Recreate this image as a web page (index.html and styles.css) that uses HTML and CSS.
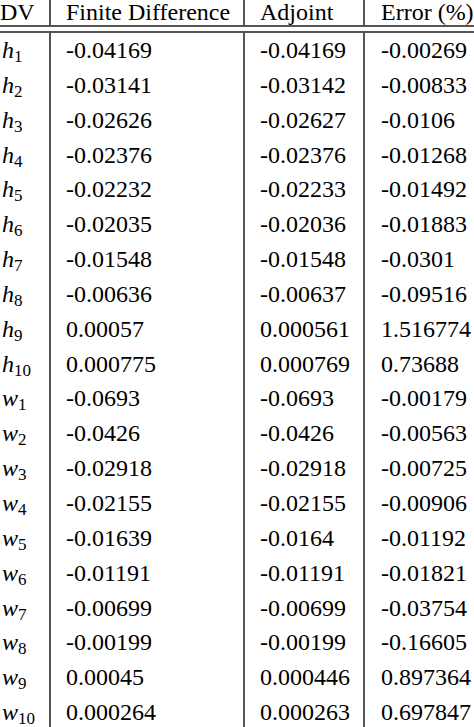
FILE: index.html
```html
<!DOCTYPE html>
<html>
<head>
<meta charset="utf-8">
<link rel="stylesheet" href="styles.css">
</head>
<body>
<div class="wrap">
  <div class="grid head">
    <div class="c c1 dv">DV</div>
    <div class="c c2">Finite Difference</div>
    <div class="c c3">Adjoint</div>
    <div class="c c4">Error (%)</div>
  </div>
  <div class="grid body">
    <div class="c c1"><i>h</i><sub>1</sub></div><div class="c c2">-0.04169</div><div class="c c3">-0.04169</div><div class="c c4">-0.00269</div>
    <div class="c c1"><i>h</i><sub>2</sub></div><div class="c c2">-0.03141</div><div class="c c3">-0.03142</div><div class="c c4">-0.00833</div>
    <div class="c c1"><i>h</i><sub>3</sub></div><div class="c c2">-0.02626</div><div class="c c3">-0.02627</div><div class="c c4">-0.0106</div>
    <div class="c c1"><i>h</i><sub>4</sub></div><div class="c c2">-0.02376</div><div class="c c3">-0.02376</div><div class="c c4">-0.01268</div>
    <div class="c c1"><i>h</i><sub>5</sub></div><div class="c c2">-0.02232</div><div class="c c3">-0.02233</div><div class="c c4">-0.01492</div>
    <div class="c c1"><i>h</i><sub>6</sub></div><div class="c c2">-0.02035</div><div class="c c3">-0.02036</div><div class="c c4">-0.01883</div>
    <div class="c c1"><i>h</i><sub>7</sub></div><div class="c c2">-0.01548</div><div class="c c3">-0.01548</div><div class="c c4">-0.0301</div>
    <div class="c c1"><i>h</i><sub>8</sub></div><div class="c c2">-0.00636</div><div class="c c3">-0.00637</div><div class="c c4">-0.09516</div>
    <div class="c c1"><i>h</i><sub>9</sub></div><div class="c c2">0.00057</div><div class="c c3">0.000561</div><div class="c c4">1.516774</div>
    <div class="c c1"><i>h</i><sub>10</sub></div><div class="c c2">0.000775</div><div class="c c3">0.000769</div><div class="c c4">0.73688</div>
    <div class="c c1"><i>w</i><sub>1</sub></div><div class="c c2">-0.0693</div><div class="c c3">-0.0693</div><div class="c c4">-0.00179</div>
    <div class="c c1"><i>w</i><sub>2</sub></div><div class="c c2">-0.0426</div><div class="c c3">-0.0426</div><div class="c c4">-0.00563</div>
    <div class="c c1"><i>w</i><sub>3</sub></div><div class="c c2">-0.02918</div><div class="c c3">-0.02918</div><div class="c c4">-0.00725</div>
    <div class="c c1"><i>w</i><sub>4</sub></div><div class="c c2">-0.02155</div><div class="c c3">-0.02155</div><div class="c c4">-0.00906</div>
    <div class="c c1"><i>w</i><sub>5</sub></div><div class="c c2">-0.01639</div><div class="c c3">-0.0164</div><div class="c c4">-0.01192</div>
    <div class="c c1"><i>w</i><sub>6</sub></div><div class="c c2">-0.01191</div><div class="c c3">-0.01191</div><div class="c c4">-0.01821</div>
    <div class="c c1"><i>w</i><sub>7</sub></div><div class="c c2">-0.00699</div><div class="c c3">-0.00699</div><div class="c c4">-0.03754</div>
    <div class="c c1"><i>w</i><sub>8</sub></div><div class="c c2">-0.00199</div><div class="c c3">-0.00199</div><div class="c c4">-0.16605</div>
    <div class="c c1"><i>w</i><sub>9</sub></div><div class="c c2">0.00045</div><div class="c c3">0.000446</div><div class="c c4">0.897364</div>
    <div class="c c1"><i>w</i><sub>10</sub></div><div class="c c2">0.000264</div><div class="c c3">0.000263</div><div class="c c4">0.697847</div>
  </div>
</div>
</body>
</html>
```
FILE: styles.css
```css
html, body {
  margin: 0;
  padding: 0;
  background: #ffffff;
}
body {
  width: 474px;
  height: 727px;
  overflow: hidden;
  font-family: "Liberation Serif", "Times New Roman", serif;
  font-size: 24px;
  color: #000000;
}
.wrap {
  margin-left: -14px;
  width: 488px;
}
.grid {
  display: grid;
  grid-template-columns: 63px 194px 120px 111px;
}
.head {
  border-bottom: 2px solid #555555;
}
.head .c {
  height: 25px;
  line-height: 25px;
}
.body {
  margin-top: 4px;
  border-top: 2px solid #555555;
  grid-auto-rows: 34.85px;
}
.body .c {
  line-height: 34.85px;
}
.c {
  white-space: nowrap;
}
.c1 {
  padding-left: 16px;
}
.head .dv {
  padding-left: 14px;
}
.c2, .c3, .c4 {
  border-left: 2px solid #555555;
}
.c2, .c3 {
  padding-left: 15px;
}
.c4 {
  padding-left: 16px;
}
i {
  font-style: italic;
}
sub {
  font-size: 17px;
  line-height: 0;
  vertical-align: -4px;
}
```
